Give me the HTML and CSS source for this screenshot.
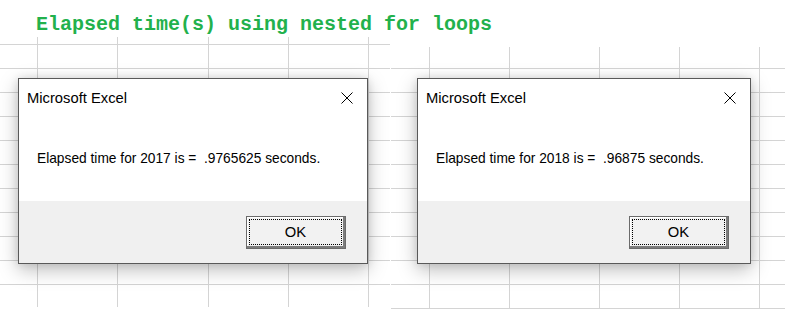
FILE: index.html
```html
<!DOCTYPE html>
<html lang="en">
<head>
<meta charset="utf-8">
<title>Elapsed time(s) using nested for loops</title>
<link rel="stylesheet" href="styles.css">
</head>
<body>
<h1 class="caption">Elapsed time(s) using nested for loops</h1>
<div class="sheets">
  <section class="sheet sheet-left">
    <div class="dialog dialog-wide">
      <div class="dialog-body">
        <div class="dialog-header">
          <span class="dialog-title">Microsoft Excel</span>
          <svg class="close-icon" width="12" height="12" viewBox="0 0 12 12" aria-hidden="true">
            <path d="M0.5 0.5 L11.5 11.5 M11.5 0.5 L0.5 11.5" stroke="#000" stroke-width="1" fill="none"/>
          </svg>
        </div>
        <p class="dialog-message">Elapsed time for 2017 is = &nbsp;.9765625 seconds.</p>
      </div>
      <div class="dialog-footer">
        <div class="ok-button"><span class="ok-focus">OK</span></div>
      </div>
    </div>
  </section>
  <section class="sheet sheet-right">
    <div class="dialog dialog-narrow">
      <div class="dialog-body">
        <div class="dialog-header">
          <span class="dialog-title">Microsoft Excel</span>
          <svg class="close-icon" width="12" height="12" viewBox="0 0 12 12" aria-hidden="true">
            <path d="M0.5 0.5 L11.5 11.5 M11.5 0.5 L0.5 11.5" stroke="#000" stroke-width="1" fill="none"/>
          </svg>
        </div>
        <p class="dialog-message">Elapsed time for 2018 is = &nbsp;.96875 seconds.</p>
      </div>
      <div class="dialog-footer">
        <div class="ok-button"><span class="ok-focus">OK</span></div>
      </div>
    </div>
  </section>
</div>
</body>
</html>
```

FILE: styles.css
```css
html, body {
  margin: 0;
  padding: 0;
}

body {
  width: 787px;
  height: 309px;
  overflow: hidden;
  background: #ffffff;
  font-family: "Liberation Sans", Arial, sans-serif;
  color: #000;
}

.caption {
  margin: 0;
  padding: 13px 0 0 36px;
  height: 24px;
  font-family: "Liberation Mono", "Courier New", monospace;
  font-weight: bold;
  font-size: 20px;
  line-height: 24px;
  color: #22b14c;
  white-space: pre;
}

.sheets {
  display: flex;
  align-items: flex-start;
  gap: 1px;
}

.sheet {
  box-sizing: border-box;
  display: flex;
  align-items: flex-start;
}

.sheet-left {
  width: 390px;
  height: 270px;
  padding: 41px 0 0 18px;
  background-image:
    linear-gradient(#d4d4d4, #d4d4d4),
    linear-gradient(#d4d4d4, #d4d4d4),
    linear-gradient(#d4d4d4, #d4d4d4),
    linear-gradient(#d4d4d4, #d4d4d4),
    linear-gradient(#d4d4d4, #d4d4d4),
    linear-gradient(to bottom, #d4d4d4 0, #d4d4d4 1px, transparent 1px);
  background-size: 1px 100%, 1px 100%, 1px 100%, 1px 100%, 1px 100%, 100% 24px;
  background-position: 37px 0, 117px 0, 208px 0, 288px 0, 368px 0, 0 7px;
  background-repeat: no-repeat, no-repeat, no-repeat, no-repeat, no-repeat, repeat-y;
}

.sheet-right {
  width: 394px;
  height: 262px;
  margin-top: 10px;
  padding: 31px 0 0 26px;
  background-image:
    linear-gradient(#d4d4d4, #d4d4d4),
    linear-gradient(#d4d4d4, #d4d4d4),
    linear-gradient(#d4d4d4, #d4d4d4),
    linear-gradient(#d4d4d4, #d4d4d4),
    linear-gradient(#d4d4d4, #d4d4d4),
    linear-gradient(to bottom, #d4d4d4 0, #d4d4d4 1px, transparent 1px);
  background-size: 1px 100%, 1px 100%, 1px 100%, 1px 100%, 1px 100%, 100% 24px;
  background-position: 38px 0, 118px 0, 208px 0, 288px 0, 368px 0, 0 21px;
  background-repeat: no-repeat, no-repeat, no-repeat, no-repeat, no-repeat, repeat-y;
}

.dialog {
  box-sizing: border-box;
  height: 186px;
  border: 1px solid #595959;
  background: #ffffff;
  display: flex;
  flex-direction: column;
  box-shadow: 0 6px 18px rgba(0, 0, 0, 0.26), 0 0 8px rgba(0, 0, 0, 0.10);
}

.dialog-wide {
  width: 350px;
}

.dialog-narrow {
  width: 334px;
}

.dialog-body {
  height: 122px;
  background: #ffffff;
  display: flex;
  flex-direction: column;
}

.dialog-header {
  display: flex;
  justify-content: space-between;
  align-items: flex-start;
  padding: 9px 14px 0 8px;
}

.dialog-title {
  font-size: 14.75px;
  line-height: 20px;
  white-space: nowrap;
}

.close-icon {
  display: block;
  margin-top: 4px;
}

.dialog-message {
  margin: 42px 0 0 18px;
  font-size: 13.75px;
  line-height: 18px;
  white-space: nowrap;
}

.dialog-footer {
  flex: 1;
  background: #f0f0f0;
  display: flex;
  justify-content: flex-end;
  align-items: flex-start;
  padding: 15px 21px 0 0;
}

.ok-button {
  box-sizing: border-box;
  width: 100px;
  height: 33px;
  border: 1px solid #6b6b6b;
  background: #f2f2f2;
  box-shadow: inset -2px -2px 0 #7d7d7d, inset 1px 1px 0 #ffffff;
  padding: 2px 3px 3px 2px;
  display: flex;
}

.ok-focus {
  flex: 1;
  border: 1px dotted #000;
  display: flex;
  align-items: center;
  justify-content: center;
  font-size: 14.75px;
  line-height: 18px;
}
```
